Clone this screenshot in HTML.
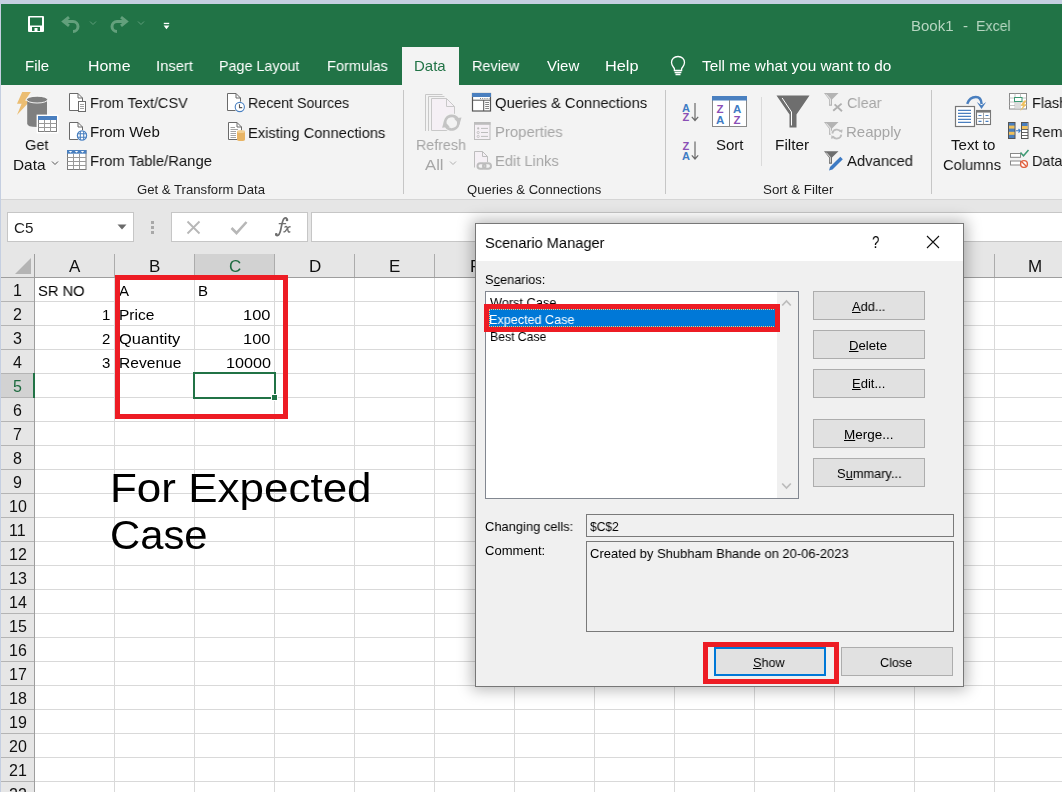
<!DOCTYPE html><html><head><meta charset="utf-8"><style>
html,body{margin:0;padding:0;width:1062px;height:792px;overflow:hidden;background:#fff;position:relative}
.r{position:absolute;display:block}
.t{position:absolute;white-space:nowrap;line-height:1;font-family:"Liberation Sans",sans-serif;will-change:transform}
u{text-decoration:underline;text-underline-offset:1px}
</style></head><body>
<div class="r" style="left:0px;top:0px;width:1062px;height:4px;background:#c5cfe1"></div>
<div class="r" style="left:0px;top:0px;width:1px;height:792px;background:#c5cfe1"></div>
<div class="r" style="left:1px;top:4px;width:1061px;height:81px;background:#217346"></div>
<div class="r" style="left:402px;top:47px;width:57px;height:38px;background:#f3f3f3"></div>
<div class="r" style="left:1px;top:85px;width:1061px;height:114px;background:#f3f3f3"></div>
<div class="r" style="left:1px;top:199px;width:1061px;height:1px;background:#d5d5d5"></div>
<div class="r" style="left:1px;top:200px;width:1061px;height:54px;background:#e6e6e6"></div>
<svg class="r" style="left:28px;top:16px" width="16" height="16" viewBox="0 0 16 16"><path d="M1 0H15Q16 0 16 1V15Q16 16 15 16H1Q0 16 0 15V1Q0 0 1 0Z" fill="#fff"/><rect x="2" y="1.5" width="12" height="8" fill="#217346"/><rect x="4" y="11" width="8" height="4" fill="#217346"/><rect x="6.5" y="12" width="3" height="3" fill="#fff"/></svg>
<svg class="r" style="left:61px;top:16px" width="22" height="18" viewBox="0 0 22 18"><path d="M3.5 5.5H12A5 5 0 0 1 12 15.5" fill="none" stroke="#63a07c" stroke-width="3"/><path d="M8 1.2L2.6 5.5L8 9.8" fill="none" stroke="#63a07c" stroke-width="3"/></svg>
<svg class="r" style="left:89px;top:20px" width="8" height="6" viewBox="0 0 8 6"><path d="M1 1.5L4 4.5L7 1.5" fill="none" stroke="#5f9d7a" stroke-width="1"/></svg>
<svg class="r" style="left:107px;top:16px" width="22" height="18" viewBox="0 0 22 18"><path d="M18.5 5.5H10A5 5 0 0 0 10 15.5" fill="none" stroke="#63a07c" stroke-width="3"/><path d="M14 1.2L19.4 5.5L14 9.8" fill="none" stroke="#63a07c" stroke-width="3"/></svg>
<svg class="r" style="left:137px;top:20px" width="8" height="6" viewBox="0 0 8 6"><path d="M1 1.5L4 4.5L7 1.5" fill="none" stroke="#5f9d7a" stroke-width="1"/></svg>
<svg class="r" style="left:162px;top:21px" width="9" height="10" viewBox="0 0 9 10"><rect x="1.8" y="1.8" width="5.4" height="1.3" fill="#fff"/><path d="M1.6 4.4H7.4L4.5 8.3Z" fill="#fff"/></svg>
<div class="t" style="left:911.38px;top:18.30px;font-size:15px;color:#b7d6c1;transform:scaleX(0.9909);transform-origin:0 0;">Book1</div>
<div class="t" style="left:963.00px;top:18.30px;font-size:15px;color:#b7d6c1;">-</div>
<div class="t" style="left:975.64px;top:18.30px;font-size:15px;color:#b7d6c1;transform:scaleX(0.9464);transform-origin:0 0;">Excel</div>
<div class="t" style="left:25.17px;top:58.00px;font-size:15px;color:#fff;transform:scaleX(0.9967);transform-origin:0 0;">File</div>
<div class="t" style="left:88.19px;top:58.00px;font-size:15px;color:#fff;transform:scaleX(1.0625);transform-origin:0 0;">Home</div>
<div class="t" style="left:155.64px;top:58.00px;font-size:15px;color:#fff;transform:scaleX(0.9855);transform-origin:0 0;">Insert</div>
<div class="t" style="left:219.13px;top:58.00px;font-size:15px;color:#fff;transform:scaleX(0.9542);transform-origin:0 0;">Page Layout</div>
<div class="t" style="left:326.50px;top:58.00px;font-size:15px;color:#fff;transform:scaleX(0.9730);transform-origin:0 0;">Formulas</div>
<div class="t" style="left:472.32px;top:58.00px;font-size:15px;color:#fff;transform:scaleX(0.9627);transform-origin:0 0;">Review</div>
<div class="t" style="left:546.93px;top:58.00px;font-size:15px;color:#fff;transform:scaleX(0.9934);transform-origin:0 0;">View</div>
<div class="t" style="left:604.96px;top:58.00px;font-size:15px;color:#fff;transform:scaleX(1.0866);transform-origin:0 0;">Help</div>
<div class="t" style="left:701.96px;top:58.00px;font-size:15px;color:#fff;transform:scaleX(1.0226);transform-origin:0 0;">Tell me what you want to do</div>
<div class="t" style="left:413.79px;top:58.00px;font-size:15px;color:#217346;transform:scaleX(0.9851);transform-origin:0 0;">Data</div>
<svg class="r" style="left:669px;top:55px" width="18" height="22" viewBox="0 0 18 22"><path d="M9 1.5C5 1.5 2.5 4.3 2.5 7.6C2.5 10.4 4.3 11.8 5.4 13.6V15.5H12.6V13.6C13.7 11.8 15.5 10.4 15.5 7.6C15.5 4.3 13 1.5 9 1.5Z" fill="none" stroke="#fff" stroke-width="1.3"/><path d="M5.6 17.5H12.4M6.5 19.5H11.5" stroke="#fff" stroke-width="1.3"/></svg>
<div class="r" style="left:403px;top:90px;width:1px;height:104px;background:#c6c6c6"></div>
<div class="r" style="left:665px;top:90px;width:1px;height:104px;background:#c6c6c6"></div>
<div class="r" style="left:931px;top:90px;width:1px;height:104px;background:#c6c6c6"></div>
<div class="r" style="left:761px;top:97px;width:1px;height:69px;background:#dadada"></div>
<div class="t" style="left:136.84px;top:182.70px;font-size:13px;color:#222;transform:scaleX(1.0121);transform-origin:0 0;">Get &amp; Transform Data</div>
<div class="t" style="left:466.88px;top:182.50px;font-size:13px;color:#222;transform:scaleX(1.0045);transform-origin:0 0;">Queries &amp; Connections</div>
<div class="t" style="left:762.69px;top:182.80px;font-size:13px;color:#222;transform:scaleX(1.0262);transform-origin:0 0;">Sort &amp; Filter</div>
<svg class="r" style="left:14px;top:90px" width="46" height="44" viewBox="0 0 46 44">
<path d="M8.2 1.9H16.8L11 10.5L15.8 11.2L3 25L7.6 13.7H3Z" fill="#ebbd72"/>
<path d="M13.2 9.8V33.5Q13.2 37 23 37Q33 37 33 33.5V9.8Z" fill="#7f7f7f"/>
<ellipse cx="23.1" cy="9.6" rx="10.6" ry="3.4" fill="#7f7f7f" stroke="#fff" stroke-width="0.9"/>
<rect x="22.6" y="24.6" width="21.8" height="18.8" fill="#fff"/>
<rect x="24.5" y="26.5" width="18" height="15" fill="#fff" stroke="#7f7f7f" stroke-width="1"/>
<rect x="24" y="26" width="19" height="4" fill="#4a7fbf"/>
<path d="M24.5 33.5H42.5M24.5 37.5H42.5M30.5 30V42M36.5 30V42" stroke="#9a9a9a" stroke-width="1"/>
</svg>
<div class="t" style="left:24.67px;top:136.90px;font-size:15px;color:#141414;transform:scaleX(0.9694);transform-origin:0 0;">Get</div>
<div class="t" style="left:13.24px;top:156.80px;font-size:15px;color:#141414;transform:scaleX(1.0245);transform-origin:0 0;">Data</div>
<svg class="r" style="left:51px;top:160px" width="8" height="6" viewBox="0 0 8 6"><path d="M1 1.5L4 4.5L7 1.5" fill="none" stroke="#555" stroke-width="1"/></svg>
<svg class="r" style="left:68px;top:93px" width="20" height="20" viewBox="0 0 20 20"><path d="M1.5 0.5H10L14.5 5V17.5H1.5Z" fill="#fff" stroke="#6a6a6a" stroke-width="1"/><path d="M10 0.5V5H14.5" fill="none" stroke="#6a6a6a" stroke-width="1"/><rect x="10.5" y="8.5" width="7" height="10" fill="#fff" stroke="#6a6a6a"/><path d="M12 11.5H16M12 13.5H16M12 15.5H16" stroke="#8a8a8a" stroke-width="0.8"/></svg>
<div class="t" style="left:90.12px;top:95.20px;font-size:15px;color:#141414;transform:scaleX(0.9629);transform-origin:0 0;">From Text/CSV</div>
<svg class="r" style="left:68px;top:122px" width="20" height="20" viewBox="0 0 20 20"><path d="M1.5 0.5H10L14.5 5V17.5H1.5Z" fill="#fff" stroke="#6a6a6a" stroke-width="1"/><path d="M10 0.5V5H14.5" fill="none" stroke="#6a6a6a" stroke-width="1"/><circle cx="14" cy="13.5" r="5.6" fill="#fff"/><circle cx="14" cy="13.5" r="4.6" fill="#fff" stroke="#4a80c0" stroke-width="1.3"/><path d="M9.5 11.8H18.5M9.5 15.2H18.5M12.3 9V18M15.7 9V18" stroke="#4a80c0" stroke-width="1.1"/></svg>
<div class="t" style="left:90.08px;top:124.30px;font-size:15px;color:#141414;transform:scaleX(0.9930);transform-origin:0 0;">From Web</div>
<svg class="r" style="left:67px;top:150px" width="20" height="21" viewBox="0 0 20 21"><rect x="0.5" y="0.5" width="18.5" height="19" fill="#fff" stroke="#7a7a7a"/><rect x="0" y="0" width="19.5" height="3.7" fill="#4a80c0"/><path d="M1.8 1H5.2L3.5 2.8ZM7.8 1H11.2L9.5 2.8ZM13.8 1H17.2L15.5 2.8Z" fill="#fff"/><path d="M0.5 7.5H19M0.5 11.5H19M0.5 15.5H19M6.5 3.7V19.5M12.5 3.7V19.5" stroke="#9a9a9a"/></svg>
<div class="t" style="left:90.08px;top:152.90px;font-size:15px;color:#141414;transform:scaleX(0.9907);transform-origin:0 0;">From Table/Range</div>
<svg class="r" style="left:226px;top:93px" width="20" height="20" viewBox="0 0 20 20"><path d="M1.5 0.5H10L14.5 5V17.5H1.5Z" fill="#fff" stroke="#6a6a6a" stroke-width="1"/><path d="M10 0.5V5H14.5" fill="none" stroke="#6a6a6a" stroke-width="1"/><circle cx="13.8" cy="14" r="5.6" fill="#fff"/><circle cx="13.8" cy="14" r="4.6" fill="#fff" stroke="#4a80c0" stroke-width="1.1"/><path d="M13.5 11.2V14.6H16.2" fill="none" stroke="#555" stroke-width="1.1"/></svg>
<div class="t" style="left:248.13px;top:95.10px;font-size:15px;color:#141414;transform:scaleX(0.9471);transform-origin:0 0;">Recent Sources</div>
<svg class="r" style="left:227px;top:122px" width="20" height="20" viewBox="0 0 20 20"><path d="M1.5 0.5H10L14.5 5V17.5H1.5Z" fill="#fff" stroke="#6a6a6a" stroke-width="1"/><path d="M10 0.5V5H14.5" fill="none" stroke="#6a6a6a" stroke-width="1"/><path d="M3.5 5.5H8M3.5 7.5H11M3.5 9.5H9M3.5 11.5H9M3.5 13.5H9M3.5 15.5H9" stroke="#9a9a9a" stroke-width="0.9"/><path d="M10 9.5V17.5Q10 19 14 19Q18 19 18 17.5V9.5Z" fill="#e8b464"/><ellipse cx="14" cy="9.5" rx="4" ry="1.5" fill="#f2cf92"/></svg>
<div class="t" style="left:248.09px;top:124.60px;font-size:15px;color:#141414;transform:scaleX(0.9804);transform-origin:0 0;">Existing Connections</div>
<svg class="r" style="left:423px;top:93px" width="40" height="40" viewBox="0 0 40 40">
<path d="M2.5 38V1.5H19.5" fill="none" stroke="#c8c8c8" stroke-width="1"/>
<path d="M5.5 38V3.5H21.5" fill="none" stroke="#c8c8c8" stroke-width="1"/>
<path d="M8.5 37.5V5.5H23.5L31.5 13.5V37.5Z" fill="#f5f0f5" stroke="#c8c8c8" stroke-width="1"/>
<path d="M23.5 5.5V13.5H31.5" fill="none" stroke="#c8c8c8" stroke-width="1"/>
<circle cx="28.8" cy="29.6" r="9.3" fill="#f3f3f3"/>
<path d="M22.2 30.5A6.7 6.7 0 0 1 34.8 26.5" fill="none" stroke="#c4c4c4" stroke-width="2.8"/>
<path d="M31 25.5L38.5 24.5L36.5 31.5Z" fill="#c4c4c4"/>
<path d="M35.4 28.8A6.7 6.7 0 0 1 22.8 32.8" fill="none" stroke="#c4c4c4" stroke-width="2.8"/>
<path d="M26.6 33.8L19.1 34.8L21.1 27.8Z" fill="#c4c4c4"/>
</svg>
<div class="t" style="left:415.53px;top:137.10px;font-size:15px;color:#a6a6a6;transform:scaleX(0.9499);transform-origin:0 0;">Refresh</div>
<div class="t" style="left:425.27px;top:156.60px;font-size:15px;color:#a6a6a6;transform:scaleX(1.1126);transform-origin:0 0;">All</div>
<svg class="r" style="left:449px;top:160px" width="8" height="6" viewBox="0 0 8 6"><path d="M1 1.5L4 4.5L7 1.5" fill="none" stroke="#b0b0b0" stroke-width="1"/></svg>
<svg class="r" style="left:471px;top:92px" width="21" height="20" viewBox="0 0 21 20"><rect x="1.5" y="1.5" width="18" height="17.5" fill="#fff" stroke="#555" stroke-width="1.2"/><rect x="1" y="1" width="19" height="4" fill="#4a7fbf"/><path d="M1.5 8.2H19.5M12.7 8.2V19" stroke="#555" stroke-width="1"/><path d="M9 6.5H18.5" stroke="#777" stroke-width="0.9" stroke-dasharray="1 1.2"/><path d="M14.2 10.5H18M14.2 12.5H18M14.2 14.5H18M14.2 16.5H18" stroke="#666" stroke-width="0.8"/></svg>
<div class="t" style="left:495.30px;top:94.90px;font-size:15px;color:#141414;transform:scaleX(0.9869);transform-origin:0 0;">Queries &amp; Connections</div>
<svg class="r" style="left:473px;top:121px" width="18" height="20" viewBox="0 0 18 20"><rect x="1.5" y="1.5" width="15.5" height="17" fill="#f5f0f5" stroke="#bdbdbd"/><rect x="1" y="1" width="16.5" height="2.8" fill="#bdbdbd"/><circle cx="5.2" cy="7.4" r="1.1" fill="#bdbdbd"/><circle cx="5.2" cy="11.5" r="1.1" fill="none" stroke="#bdbdbd" stroke-width="0.8"/><circle cx="5.2" cy="15.4" r="1.1" fill="none" stroke="#bdbdbd" stroke-width="0.8"/><path d="M8 7.4H15M8 11.5H15M8 15.4H15" stroke="#bdbdbd" stroke-width="1"/></svg>
<div class="t" style="left:494.78px;top:123.50px;font-size:15px;color:#a6a6a6;transform:scaleX(0.9911);transform-origin:0 0;">Properties</div>
<svg class="r" style="left:473px;top:150px" width="20" height="21" viewBox="0 0 20 21"><path d="M1.5 17.5V1.5H9.5L14.5 6.5V12" fill="#f5f0f5" stroke="#bdbdbd"/><path d="M9.5 1.5V6.5H14.5" fill="none" stroke="#bdbdbd"/><rect x="4.5" y="13.2" width="8" height="5.6" rx="2.8" fill="none" stroke="#bdbdbd" stroke-width="2"/><rect x="10" y="13.2" width="8" height="5.6" rx="2.8" fill="none" stroke="#bdbdbd" stroke-width="2"/></svg>
<div class="t" style="left:494.79px;top:152.90px;font-size:15px;color:#a6a6a6;transform:scaleX(0.9801);transform-origin:0 0;">Edit Links</div>
<svg class="r" style="left:681px;top:101px" width="20" height="22" viewBox="0 0 20 22"><text x="1" y="10.5" font-family="Liberation Sans" font-weight="bold" font-size="11" fill="#3f7cc4">A</text><text x="1.5" y="20" font-family="Liberation Sans" font-weight="bold" font-size="11" fill="#8a4fb5">Z</text><path d="M14 2V19.5M10.8 15.8L14 19.5L17.2 15.8" fill="none" stroke="#6a6a6a" stroke-width="1.2"/></svg>
<svg class="r" style="left:681px;top:139px" width="20" height="22" viewBox="0 0 20 22"><text x="1.5" y="10.5" font-family="Liberation Sans" font-weight="bold" font-size="11" fill="#8a4fb5">Z</text><text x="1" y="21" font-family="Liberation Sans" font-weight="bold" font-size="11" fill="#3f7cc4">A</text><path d="M14 2.5V20M10.8 16.3L14 20L17.2 16.3" fill="none" stroke="#6a6a6a" stroke-width="1.2"/></svg>
<svg class="r" style="left:711px;top:95px" width="37" height="33" viewBox="0 0 37 33"><rect x="1.5" y="1.5" width="34" height="30" fill="#fff" stroke="#888"/><rect x="1" y="1" width="35" height="4.5" fill="#4a80c0"/><path d="M18.5 5V31.5" stroke="#888"/><text x="5.5" y="17.5" font-family="Liberation Sans" font-weight="bold" font-size="11.5" fill="#8a4fb5">Z</text><text x="5" y="28.5" font-family="Liberation Sans" font-weight="bold" font-size="11.5" fill="#3f7cc4">A</text><text x="22" y="17.5" font-family="Liberation Sans" font-weight="bold" font-size="11.5" fill="#3f7cc4">A</text><text x="22.5" y="28.5" font-family="Liberation Sans" font-weight="bold" font-size="11.5" fill="#8a4fb5">Z</text></svg>
<div class="t" style="left:715.62px;top:136.80px;font-size:15px;color:#141414;transform:scaleX(0.9993);transform-origin:0 0;">Sort</div>
<svg class="r" style="left:776px;top:95px" width="35" height="34" viewBox="0 0 35 34"><path d="M0.5 0.5H33.5L20.5 19.5V32.5H13.5V19.5Z" fill="#6e6e6e"/><path d="M4.5 2.5H29.5" stroke="#6e6e6e"/><path d="M6 2.8L15.5 17V30.5" fill="none" stroke="#fff" stroke-width="1"/><path d="M2.5 2.3H31" stroke="#6e6e6e" stroke-width="1"/></svg>
<div class="t" style="left:775.14px;top:136.80px;font-size:15px;color:#141414;transform:scaleX(1.0234);transform-origin:0 0;">Filter</div>
<svg class="r" style="left:823px;top:92px" width="21" height="21" viewBox="0 0 21 21"><path d="M1 1H15.5L9 7.5V13.8H6V7.5Z" fill="#b4b4b4"/><path d="M3.2 2.4L7.3 7V12.6" fill="none" stroke="#fff" stroke-width="0.8"/><path d="M10.2 18.8L18.6 11.6M11.6 12.4L19 19.2" stroke="#b0b0b0" stroke-width="1.9"/></svg>
<div class="t" style="left:846.57px;top:95.20px;font-size:15px;color:#a6a6a6;transform:scaleX(0.9617);transform-origin:0 0;">Clear</div>
<svg class="r" style="left:823px;top:121px" width="21" height="21" viewBox="0 0 21 21"><path d="M1 1H15.5L9 7.5V13.8H6V7.5Z" fill="#b4b4b4"/><path d="M3.2 2.4L7.3 7V12.6" fill="none" stroke="#fff" stroke-width="0.8"/><circle cx="13.8" cy="13" r="6.2" fill="#f3f3f3"/><path d="M9.3 12.5A4.6 4.6 0 0 1 17.8 10.8" fill="none" stroke="#bdbdbd" stroke-width="1.8"/><path d="M16 9.2L19.6 8.4L19 12.2Z" fill="#bdbdbd"/><path d="M18.3 13.6A4.6 4.6 0 0 1 9.8 15.3" fill="none" stroke="#bdbdbd" stroke-width="1.8"/><path d="M11.6 16.9L8 17.7L8.6 13.9Z" fill="#bdbdbd"/></svg>
<div class="t" style="left:846.08px;top:123.90px;font-size:15px;color:#a6a6a6;transform:scaleX(0.9930);transform-origin:0 0;">Reapply</div>
<svg class="r" style="left:823px;top:150px" width="22" height="22" viewBox="0 0 22 22"><path d="M1 1.2H15.5L9 7.5V13.8H6V7.5Z" fill="#6e6e6e"/><path d="M3.2 2.6L7.3 7.2V12.6" fill="none" stroke="#fff" stroke-width="0.8"/><path d="M17.3 6.8L19.8 9.3L9.5 19.6L6 20.6L7 17.1Z" fill="#3e7bc4"/></svg>
<div class="t" style="left:847.27px;top:153.30px;font-size:15px;color:#141414;transform:scaleX(0.9905);transform-origin:0 0;">Advanced</div>
<svg class="r" style="left:954px;top:94px" width="38" height="34" viewBox="0 0 38 34">
<rect x="1.5" y="12.5" width="19" height="20" fill="#fff" stroke="#777" stroke-width="1.2"/>
<path d="M4 16.4H17M4 19.4H17M4 22.4H17M4 25.4H17M4 28.4H17" stroke="#4a7fbf" stroke-width="1.1"/>
<rect x="22.5" y="16.5" width="14" height="14" fill="#fff" stroke="#777" stroke-width="1.1"/>
<rect x="22" y="16" width="15" height="2.6" fill="#777"/>
<path d="M29.5 18.5V30.5M22.5 24.5H36.5" stroke="#999" stroke-width="0.9"/>
<path d="M24.5 21.5H27.5M31.5 21.5H34.5M24.5 27.4H27.5M31.5 27.4H34.5" stroke="#4a7fbf" stroke-width="1.1"/>
<path d="M13.2 9.8Q15.5 3 21.8 2.9Q27.3 2.9 27.6 10" fill="none" stroke="#4a7fbf" stroke-width="2.5"/>
<path d="M22.8 8L27.5 11.2L32.2 8L27.5 15Z" fill="#4a7fbf"/>
</svg>
<div class="t" style="left:950.66px;top:136.80px;font-size:15px;color:#141414;transform:scaleX(1.0042);transform-origin:0 0;">Text to</div>
<div class="t" style="left:943.25px;top:157.10px;font-size:15px;color:#141414;transform:scaleX(0.9795);transform-origin:0 0;">Columns</div>
<svg class="r" style="left:1008px;top:92px" width="21" height="20" viewBox="0 0 21 20"><rect x="1.5" y="1.5" width="17" height="15.5" fill="#fff" stroke="#8a8a8a"/><path d="M1.5 6H18.5M1.5 10H18.5M1.5 13.5H18.5M7 1.5V17M12.5 1.5V17" stroke="#b5b5b5" stroke-width="0.8"/><rect x="7" y="10.5" width="6" height="6" fill="#dcdcdc"/><rect x="6.5" y="5.5" width="7.5" height="4" fill="#fff" stroke="#3d9a74" stroke-width="1"/><path d="M16.2 8.5L12.5 13.5H15.2L12.2 19.2L18.8 12.2H16.2L18.6 8.5Z" fill="#f0c05a"/></svg>
<div class="t" style="left:1031.80px;top:94.80px;font-size:15px;color:#141414;transform:scaleX(0.96);transform-origin:0 0">Flash Fill</div>
<svg class="r" style="left:1008px;top:122px" width="21" height="18" viewBox="0 0 21 18"><rect x="0.5" y="0.5" width="6.5" height="16" fill="#4a7fbf" stroke="#555"/><rect x="1" y="3.6" width="5.5" height="3" fill="#f0c05a"/><rect x="1" y="9.8" width="5.5" height="3" fill="#f0c05a"/><rect x="13.5" y="0.5" width="6.5" height="16" fill="#fff" stroke="#555"/><rect x="14" y="1" width="5.5" height="3" fill="#4a7fbf"/><rect x="14" y="4" width="5.5" height="3" fill="#f0c05a"/><path d="M13.5 7.5H20M13.5 10.5H20M13.5 13.5H20" stroke="#555" stroke-width="0.9"/><path d="M8 8.8H12M10.5 7L12.2 8.8L10.5 10.6" fill="none" stroke="#3f7cc4" stroke-width="1.1"/></svg>
<div class="t" style="left:1031.80px;top:124.30px;font-size:15px;color:#141414;transform:scaleX(0.96);transform-origin:0 0">Remove Duplicates</div>
<svg class="r" style="left:1009px;top:149px" width="21" height="19" viewBox="0 0 21 19"><rect x="1.5" y="4.5" width="10" height="3.8" fill="#fff" stroke="#888"/><rect x="1.5" y="12" width="10" height="4" fill="#fff" stroke="#888"/><path d="M11.5 3.5L14.5 6.8L19.5 1" fill="none" stroke="#3d9a74" stroke-width="1.5"/><circle cx="15" cy="15" r="3.4" fill="#fff" stroke="#e0603f" stroke-width="1.4"/><path d="M12.8 12.8L17.2 17.2" stroke="#e0603f" stroke-width="1.3"/></svg>
<div class="t" style="left:1031.80px;top:153.00px;font-size:15px;color:#141414;transform:scaleX(0.96);transform-origin:0 0">Data Validation</div>
<div class="r" style="left:7px;top:212px;width:127px;height:30px;background:#fff;border:1px solid #c6c6c6;box-sizing:border-box"></div>
<div class="t" style="left:13.73px;top:220.30px;font-size:15px;color:#222;transform:scaleX(1.0122);transform-origin:0 0;">C5</div>
<svg class="r" style="left:117px;top:224px" width="10" height="6" viewBox="0 0 10 6"><path d="M0.5 0.5H9.5L5 5.5Z" fill="#6a6a6a"/></svg>
<div class="r" style="left:151px;top:221px;width:3px;height:3px;background:#a8a8a8"></div>
<div class="r" style="left:151px;top:226px;width:3px;height:3px;background:#a8a8a8"></div>
<div class="r" style="left:151px;top:231px;width:3px;height:3px;background:#a8a8a8"></div>
<div class="r" style="left:171px;top:212px;width:137px;height:30px;background:#fff;border:1px solid #c6c6c6;box-sizing:border-box"></div>
<svg class="r" style="left:186px;top:220px" width="15" height="15" viewBox="0 0 15 15"><path d="M1.5 1.5L13.5 13.5M13.5 1.5L1.5 13.5" stroke="#b7b7b7" stroke-width="1.8"/></svg>
<svg class="r" style="left:230px;top:220px" width="18" height="15" viewBox="0 0 18 15"><path d="M1.5 8L6.5 13L16.5 2" fill="none" stroke="#b7b7b7" stroke-width="2.6"/></svg>
<svg class="r" style="left:268px;top:212px" width="30" height="30" viewBox="0 0 30 30"><g fill="none" stroke="#6f6f6f" stroke-linecap="round"><path d="M19.2 8.2C19.4 6.2 17.6 5.2 16 6.6C14.6 7.9 14 11.5 13 16.5C12.2 20.6 11.4 23.6 9.2 23.6C8.2 23.6 7.8 23 8.1 22.2" stroke-width="1.7"/><path d="M11.2 11.7H17.6" stroke-width="1.2"/><path d="M17 15Q18.8 13.8 19.3 15.8L20.2 19.2Q20.6 20.6 21.8 19.8" stroke-width="1.4"/><path d="M22 14.8Q21 14.6 19.5 16.4L17.6 18.8Q16.6 20.2 16 19.8" stroke-width="1.4"/></g><circle cx="19" cy="8" r="1.3" fill="#6f6f6f"/><circle cx="8.3" cy="22.2" r="1.3" fill="#6f6f6f"/></svg>
<div class="r" style="left:311px;top:212px;width:760px;height:30px;background:#fff;border:1px solid #c6c6c6;box-sizing:border-box"></div>
<div class="r" style="left:1px;top:254px;width:1061px;height:24px;background:#e6e6e6"></div>
<div class="r" style="left:1px;top:254px;width:34px;height:538px;background:#e6e6e6"></div>
<div class="r" style="left:35px;top:278px;width:1027px;height:514px;background:#fff"></div>
<div class="r" style="left:194px;top:254px;width:80px;height:23px;background:#d2d2d2"></div>
<div class="r" style="left:1px;top:374px;width:33px;height:23px;background:#d2d2d2"></div>
<svg class="r" style="left:14px;top:257px" width="18" height="18" viewBox="0 0 18 18"><path d="M17 1V17H1Z" fill="#b4b4b4"/></svg>
<div class="r" style="left:114px;top:278px;width:1px;height:514px;background:#d9d9d9"></div>
<div class="r" style="left:114px;top:254px;width:1px;height:23px;background:#acacac"></div>
<div class="r" style="left:194px;top:278px;width:1px;height:514px;background:#d9d9d9"></div>
<div class="r" style="left:194px;top:254px;width:1px;height:23px;background:#acacac"></div>
<div class="r" style="left:274px;top:278px;width:1px;height:514px;background:#d9d9d9"></div>
<div class="r" style="left:274px;top:254px;width:1px;height:23px;background:#acacac"></div>
<div class="r" style="left:354px;top:278px;width:1px;height:514px;background:#d9d9d9"></div>
<div class="r" style="left:354px;top:254px;width:1px;height:23px;background:#acacac"></div>
<div class="r" style="left:434px;top:278px;width:1px;height:514px;background:#d9d9d9"></div>
<div class="r" style="left:434px;top:254px;width:1px;height:23px;background:#acacac"></div>
<div class="r" style="left:514px;top:278px;width:1px;height:514px;background:#d9d9d9"></div>
<div class="r" style="left:514px;top:254px;width:1px;height:23px;background:#acacac"></div>
<div class="r" style="left:594px;top:278px;width:1px;height:514px;background:#d9d9d9"></div>
<div class="r" style="left:594px;top:254px;width:1px;height:23px;background:#acacac"></div>
<div class="r" style="left:674px;top:278px;width:1px;height:514px;background:#d9d9d9"></div>
<div class="r" style="left:674px;top:254px;width:1px;height:23px;background:#acacac"></div>
<div class="r" style="left:754px;top:278px;width:1px;height:514px;background:#d9d9d9"></div>
<div class="r" style="left:754px;top:254px;width:1px;height:23px;background:#acacac"></div>
<div class="r" style="left:834px;top:278px;width:1px;height:514px;background:#d9d9d9"></div>
<div class="r" style="left:834px;top:254px;width:1px;height:23px;background:#acacac"></div>
<div class="r" style="left:914px;top:278px;width:1px;height:514px;background:#d9d9d9"></div>
<div class="r" style="left:914px;top:254px;width:1px;height:23px;background:#acacac"></div>
<div class="r" style="left:994px;top:278px;width:1px;height:514px;background:#d9d9d9"></div>
<div class="r" style="left:994px;top:254px;width:1px;height:23px;background:#acacac"></div>
<div class="r" style="left:1074px;top:278px;width:1px;height:514px;background:#d9d9d9"></div>
<div class="r" style="left:1074px;top:254px;width:1px;height:23px;background:#acacac"></div>
<div class="r" style="left:1154px;top:278px;width:1px;height:514px;background:#d9d9d9"></div>
<div class="r" style="left:1154px;top:254px;width:1px;height:23px;background:#acacac"></div>
<div class="r" style="left:35px;top:301px;width:1027px;height:1px;background:#d9d9d9"></div>
<div class="r" style="left:1px;top:301px;width:33px;height:1px;background:#b4b4b4"></div>
<div class="r" style="left:35px;top:325px;width:1027px;height:1px;background:#d9d9d9"></div>
<div class="r" style="left:1px;top:325px;width:33px;height:1px;background:#b4b4b4"></div>
<div class="r" style="left:35px;top:349px;width:1027px;height:1px;background:#d9d9d9"></div>
<div class="r" style="left:1px;top:349px;width:33px;height:1px;background:#b4b4b4"></div>
<div class="r" style="left:35px;top:373px;width:1027px;height:1px;background:#d9d9d9"></div>
<div class="r" style="left:1px;top:373px;width:33px;height:1px;background:#b4b4b4"></div>
<div class="r" style="left:35px;top:397px;width:1027px;height:1px;background:#d9d9d9"></div>
<div class="r" style="left:1px;top:397px;width:33px;height:1px;background:#b4b4b4"></div>
<div class="r" style="left:35px;top:421px;width:1027px;height:1px;background:#d9d9d9"></div>
<div class="r" style="left:1px;top:421px;width:33px;height:1px;background:#b4b4b4"></div>
<div class="r" style="left:35px;top:445px;width:1027px;height:1px;background:#d9d9d9"></div>
<div class="r" style="left:1px;top:445px;width:33px;height:1px;background:#b4b4b4"></div>
<div class="r" style="left:35px;top:469px;width:1027px;height:1px;background:#d9d9d9"></div>
<div class="r" style="left:1px;top:469px;width:33px;height:1px;background:#b4b4b4"></div>
<div class="r" style="left:35px;top:493px;width:1027px;height:1px;background:#d9d9d9"></div>
<div class="r" style="left:1px;top:493px;width:33px;height:1px;background:#b4b4b4"></div>
<div class="r" style="left:35px;top:517px;width:1027px;height:1px;background:#d9d9d9"></div>
<div class="r" style="left:1px;top:517px;width:33px;height:1px;background:#b4b4b4"></div>
<div class="r" style="left:35px;top:541px;width:1027px;height:1px;background:#d9d9d9"></div>
<div class="r" style="left:1px;top:541px;width:33px;height:1px;background:#b4b4b4"></div>
<div class="r" style="left:35px;top:565px;width:1027px;height:1px;background:#d9d9d9"></div>
<div class="r" style="left:1px;top:565px;width:33px;height:1px;background:#b4b4b4"></div>
<div class="r" style="left:35px;top:589px;width:1027px;height:1px;background:#d9d9d9"></div>
<div class="r" style="left:1px;top:589px;width:33px;height:1px;background:#b4b4b4"></div>
<div class="r" style="left:35px;top:613px;width:1027px;height:1px;background:#d9d9d9"></div>
<div class="r" style="left:1px;top:613px;width:33px;height:1px;background:#b4b4b4"></div>
<div class="r" style="left:35px;top:637px;width:1027px;height:1px;background:#d9d9d9"></div>
<div class="r" style="left:1px;top:637px;width:33px;height:1px;background:#b4b4b4"></div>
<div class="r" style="left:35px;top:661px;width:1027px;height:1px;background:#d9d9d9"></div>
<div class="r" style="left:1px;top:661px;width:33px;height:1px;background:#b4b4b4"></div>
<div class="r" style="left:35px;top:685px;width:1027px;height:1px;background:#d9d9d9"></div>
<div class="r" style="left:1px;top:685px;width:33px;height:1px;background:#b4b4b4"></div>
<div class="r" style="left:35px;top:709px;width:1027px;height:1px;background:#d9d9d9"></div>
<div class="r" style="left:1px;top:709px;width:33px;height:1px;background:#b4b4b4"></div>
<div class="r" style="left:35px;top:733px;width:1027px;height:1px;background:#d9d9d9"></div>
<div class="r" style="left:1px;top:733px;width:33px;height:1px;background:#b4b4b4"></div>
<div class="r" style="left:35px;top:757px;width:1027px;height:1px;background:#d9d9d9"></div>
<div class="r" style="left:1px;top:757px;width:33px;height:1px;background:#b4b4b4"></div>
<div class="r" style="left:35px;top:781px;width:1027px;height:1px;background:#d9d9d9"></div>
<div class="r" style="left:1px;top:781px;width:33px;height:1px;background:#b4b4b4"></div>
<div class="r" style="left:1px;top:277px;width:1061px;height:1px;background:#9e9e9e"></div>
<div class="r" style="left:34px;top:254px;width:1px;height:538px;background:#9e9e9e"></div>
<div class="t" style="left:69.33px;top:257.61px;font-size:17px;color:#111;">A</div>
<div class="t" style="left:149.33px;top:257.61px;font-size:17px;color:#111;">B</div>
<div class="t" style="left:228.86px;top:257.61px;font-size:17px;color:#1e6b40;">C</div>
<div class="t" style="left:308.86px;top:257.61px;font-size:17px;color:#111;">D</div>
<div class="t" style="left:389.33px;top:257.61px;font-size:17px;color:#111;">E</div>
<div class="t" style="left:469.81px;top:257.61px;font-size:17px;color:#111;">F</div>
<div class="t" style="left:548.39px;top:257.61px;font-size:17px;color:#111;">G</div>
<div class="t" style="left:628.86px;top:257.61px;font-size:17px;color:#111;">H</div>
<div class="t" style="left:712.64px;top:257.61px;font-size:17px;color:#111;">I</div>
<div class="t" style="left:790.75px;top:257.61px;font-size:17px;color:#111;">J</div>
<div class="t" style="left:869.33px;top:257.61px;font-size:17px;color:#111;">K</div>
<div class="t" style="left:950.27px;top:257.61px;font-size:17px;color:#111;">L</div>
<div class="t" style="left:1027.92px;top:257.61px;font-size:17px;color:#111;">M</div>
<div class="t" style="left:13.05px;top:282.86px;font-size:16px;color:#111;">1</div>
<div class="t" style="left:13.05px;top:306.86px;font-size:16px;color:#111;">2</div>
<div class="t" style="left:13.05px;top:330.86px;font-size:16px;color:#111;">3</div>
<div class="t" style="left:13.05px;top:354.86px;font-size:16px;color:#111;">4</div>
<div class="t" style="left:13.05px;top:378.86px;font-size:16px;color:#1e6b40;">5</div>
<div class="t" style="left:13.05px;top:402.86px;font-size:16px;color:#111;">6</div>
<div class="t" style="left:13.05px;top:426.86px;font-size:16px;color:#111;">7</div>
<div class="t" style="left:13.05px;top:450.86px;font-size:16px;color:#111;">8</div>
<div class="t" style="left:13.05px;top:474.86px;font-size:16px;color:#111;">9</div>
<div class="t" style="left:8.60px;top:498.86px;font-size:16px;color:#111;">10</div>
<div class="t" style="left:9.20px;top:522.86px;font-size:16px;color:#111;">11</div>
<div class="t" style="left:8.60px;top:546.86px;font-size:16px;color:#111;">12</div>
<div class="t" style="left:8.60px;top:570.86px;font-size:16px;color:#111;">13</div>
<div class="t" style="left:8.60px;top:594.86px;font-size:16px;color:#111;">14</div>
<div class="t" style="left:8.60px;top:618.86px;font-size:16px;color:#111;">15</div>
<div class="t" style="left:8.60px;top:642.86px;font-size:16px;color:#111;">16</div>
<div class="t" style="left:8.60px;top:666.86px;font-size:16px;color:#111;">17</div>
<div class="t" style="left:8.60px;top:690.86px;font-size:16px;color:#111;">18</div>
<div class="t" style="left:8.60px;top:714.86px;font-size:16px;color:#111;">19</div>
<div class="t" style="left:8.60px;top:738.86px;font-size:16px;color:#111;">20</div>
<div class="t" style="left:8.60px;top:762.86px;font-size:16px;color:#111;">21</div>
<div class="t" style="left:8.60px;top:786.86px;font-size:16px;color:#111;">22</div>
<div class="r" style="left:33px;top:373px;width:2px;height:25px;background:#217346"></div>
<div class="t" style="left:37.63px;top:282.90px;font-size:15px;color:#000;transform:scaleX(0.9825);transform-origin:0 0;">SR NO</div>
<div class="t" style="left:102.39px;top:306.90px;font-size:15px;color:#000;">1</div>
<div class="t" style="left:102.41px;top:330.90px;font-size:15px;color:#000;">2</div>
<div class="t" style="left:102.32px;top:354.90px;font-size:15px;color:#000;">3</div>
<div class="t" style="left:119.30px;top:282.90px;font-size:15px;color:#000;">A</div>
<div class="t" style="left:198.00px;top:282.90px;font-size:15px;color:#000;">B</div>
<div class="t" style="left:118.53px;top:306.60px;font-size:15px;color:#000;transform:scaleX(1.0347);transform-origin:0 0;">Price</div>
<div class="t" style="left:119.02px;top:330.90px;font-size:15px;color:#000;transform:scaleX(1.0976);transform-origin:0 0;">Quantity</div>
<div class="t" style="left:118.52px;top:354.60px;font-size:15px;color:#000;transform:scaleX(1.0404);transform-origin:0 0;">Revenue</div>
<div class="t" style="left:243.45px;top:306.60px;font-size:15px;color:#000;transform:scaleX(1.0945);transform-origin:0 0;">100</div>
<div class="t" style="left:243.45px;top:330.90px;font-size:15px;color:#000;transform:scaleX(1.0945);transform-origin:0 0;">100</div>
<div class="t" style="left:225.77px;top:354.60px;font-size:15px;color:#000;transform:scaleX(1.0804);transform-origin:0 0;">10000</div>
<div class="r" style="left:193px;top:372px;width:83px;height:27px;border:2px solid #217346;box-sizing:border-box"></div>
<div class="r" style="left:271px;top:394px;width:5px;height:5px;background:#217346;border:1px solid #fff;box-sizing:content-box"></div>
<div class="t" style="left:110.29px;top:467.99px;font-size:41px;color:#000;transform:scaleX(1.0726);transform-origin:0 0;">For Expected</div>
<div class="t" style="left:109.88px;top:515.49px;font-size:41px;color:#000;transform:scaleX(1.0184);transform-origin:0 0;">Case</div>
<div class="r" style="left:115px;top:275px;width:173px;height:144px;border:5px solid #ed1c24;box-sizing:border-box"></div>
<div class="r" style="left:475px;top:223px;width:489px;height:464px;box-shadow:0 0 14px 3px rgba(0,0,0,0.28);background:#f0f0f0;border:1px solid #777;box-sizing:border-box"></div>
<div class="r" style="left:476px;top:224px;width:487px;height:37px;background:#fff"></div>
<div class="t" style="left:484.74px;top:234.80px;font-size:15px;color:#000;transform:scaleX(0.9750);transform-origin:0 0;">Scenario Manager</div>
<div class="t" style="left:872.45px;top:233.61px;font-size:17px;color:#000;transform:scaleX(0.7875);transform-origin:0 0;">?</div>
<svg class="r" style="left:926px;top:235px" width="14" height="14" viewBox="0 0 14 14"><path d="M1 1L13 13M13 1L1 13" stroke="#111" stroke-width="1.1"/></svg>
<div class="t" style="left:484.82px;top:273.30px;font-size:13px;color:#000;transform:scaleX(0.9825);transform-origin:0 0;">S<u>c</u>enarios:</div>
<div class="r" style="left:485px;top:291px;width:314px;height:208px;background:#fff;border:1px solid #828790;box-sizing:border-box"></div>
<div class="r" style="left:777px;top:292px;width:21px;height:206px;background:#f0f0f0"></div>
<svg class="r" style="left:781px;top:298px" width="11" height="9" viewBox="0 0 11 9"><path d="M1.2 7.5L5.5 3L9.8 7.5" fill="none" stroke="#bcbcbc" stroke-width="1.8"/></svg>
<svg class="r" style="left:781px;top:482px" width="11" height="9" viewBox="0 0 11 9"><path d="M1.2 1.5L5.5 6L9.8 1.5" fill="none" stroke="#bcbcbc" stroke-width="1.8"/></svg>
<div class="t" style="left:490.44px;top:296.30px;font-size:13px;color:#000;transform:scaleX(0.9801);transform-origin:0 0;">Worst Case</div>
<div class="r" style="left:489px;top:309px;width:287px;height:18px;background:#0078d7;outline:1px dotted #f7c873;outline-offset:-1px"></div>
<div class="t" style="left:489.47px;top:313.30px;font-size:13px;color:#fff;transform:scaleX(0.9686);transform-origin:0 0;">Expected Case</div>
<div class="t" style="left:489.50px;top:330.20px;font-size:13px;color:#000;transform:scaleX(0.9395);transform-origin:0 0;">Best Case</div>
<div class="r" style="left:484px;top:304px;width:296px;height:28px;border:5px solid #ed1c24;box-sizing:border-box"></div>
<div class="r" style="left:813px;top:291px;width:112px;height:29px;background:#e1e1e1;border:1px solid #adadad;box-sizing:border-box"></div>
<div class="t" style="left:852.38px;top:300.00px;font-size:13px;color:#000;transform:scaleX(0.9831);transform-origin:0 0;"><u>A</u>dd...</div>
<div class="r" style="left:813px;top:330px;width:112px;height:29px;background:#e1e1e1;border:1px solid #adadad;box-sizing:border-box"></div>
<div class="t" style="left:848.92px;top:339.00px;font-size:13px;color:#000;transform:scaleX(1.0102);transform-origin:0 0;"><u>D</u>elete</div>
<div class="r" style="left:813px;top:369px;width:112px;height:29px;background:#e1e1e1;border:1px solid #adadad;box-sizing:border-box"></div>
<div class="t" style="left:851.84px;top:377.40px;font-size:13px;color:#000;transform:scaleX(0.9941);transform-origin:0 0;"><u>E</u>dit...</div>
<div class="r" style="left:813px;top:419px;width:112px;height:29px;background:#e1e1e1;border:1px solid #adadad;box-sizing:border-box"></div>
<div class="t" style="left:844.29px;top:428.00px;font-size:13px;color:#000;transform:scaleX(1.0367);transform-origin:0 0;"><u>M</u>erge...</div>
<div class="r" style="left:813px;top:458px;width:112px;height:29px;background:#e1e1e1;border:1px solid #adadad;box-sizing:border-box"></div>
<div class="t" style="left:836.52px;top:466.70px;font-size:13px;color:#000;transform:scaleX(0.9872);transform-origin:0 0;">S<u>u</u>mmary...</div>
<div class="t" style="left:484.94px;top:519.80px;font-size:13px;color:#000;transform:scaleX(0.9926);transform-origin:0 0;">Changing cells:</div>
<div class="r" style="left:586px;top:514px;width:368px;height:23px;background:#f0f0f0;border:1px solid #7a7a7a;box-sizing:border-box"></div>
<div class="t" style="left:590.37px;top:519.80px;font-size:13px;color:#000;transform:scaleX(0.9278);transform-origin:0 0;">$C$2</div>
<div class="t" style="left:484.94px;top:543.80px;font-size:13px;color:#000;transform:scaleX(1.0032);transform-origin:0 0;">Comment:</div>
<div class="r" style="left:586px;top:541px;width:368px;height:91px;background:#f0f0f0;border:1px solid #7a7a7a;box-sizing:border-box"></div>
<div class="t" style="left:589.84px;top:547.30px;font-size:13px;color:#000;transform:scaleX(0.9971);transform-origin:0 0;">Created by Shubham Bhande on 20-06-2023</div>
<div class="r" style="left:714px;top:647px;width:112px;height:29px;background:#e1e1e1;border:2px solid #0078d7;box-sizing:border-box"></div>
<div class="t" style="left:753.43px;top:656.00px;font-size:13px;color:#000;transform:scaleX(0.9699);transform-origin:0 0;"><u>S</u>how</div>
<div class="r" style="left:841px;top:647px;width:112px;height:29px;background:#e1e1e1;border:1px solid #adadad;box-sizing:border-box"></div>
<div class="t" style="left:880.36px;top:656.00px;font-size:13px;color:#000;transform:scaleX(0.9688);transform-origin:0 0;">Close</div>
<div class="r" style="left:703px;top:642px;width:136px;height:42px;border:5px solid #ed1c24;box-sizing:border-box"></div>
</body></html>
